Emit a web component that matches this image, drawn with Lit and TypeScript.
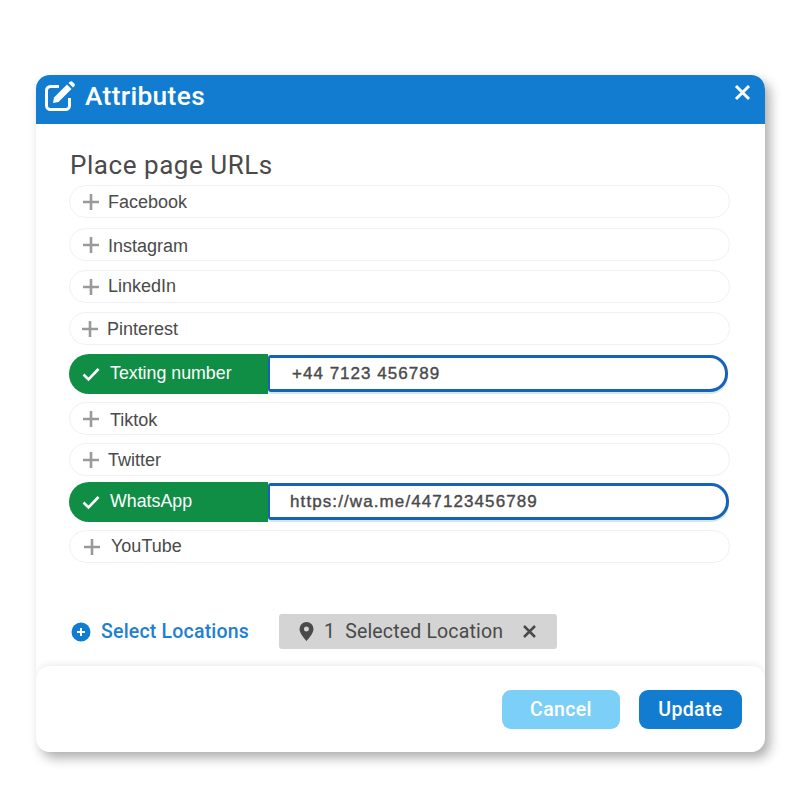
import { LitElement, html, css, svg } from "lit";
import { customElement } from "lit/decorators.js";

interface Row { label: string; gap: number; value?: string; track?: number; wide?: boolean; textX?: number; textY?: number; iconX?: number; iconY?: number; }

const rows: Row[] = [
  { label: "Facebook", gap: 0, textX: 38, textY: 6, iconX: 13, iconY: 8 },
  { label: "Instagram", gap: 10, textX: 38, textY: 7, iconX: 13, iconY: 8 },
  { label: "LinkedIn", gap: 9, textX: 38, textY: 5, iconX: 13, iconY: 8 },
  { label: "Pinterest", gap: 9, textX: 37, textY: 6, iconX: 12, iconY: 8 },
  { label: "Texting number", gap: 9, value: "+44 7123 456789", track: 1.02 },
  { label: "Tiktok", gap: 8, textX: 40, textY: 7, iconX: 13, iconY: 8 },
  { label: "Twitter", gap: 8, textX: 38, textY: 6, iconX: 13, iconY: 8 },
  { label: "WhatsApp", gap: 6, value: "https://wa.me/447123456789", track: 1.1, wide: true },
  { label: "YouTube", gap: 8, textX: 41, textY: 5, iconX: 14, iconY: 8 },
];

const plus = svg`<path d="M8 0v16M0 8h16" stroke="#9a9a9a" stroke-width="2.6" fill="none"/>`;
const check = svg`<path d="M1.500 8.500 6.500 13.500 16.500 3" stroke="#fff" stroke-width="2.600" fill="none"/>`;

@customElement("app-root")
export class AppRoot extends LitElement {
  static styles = css`
    :host { display: block; width: 800px; height: 800px; background: #fff; font-family: Roboto, "Liberation Sans", sans-serif; padding: 75px 35px 0 36px; box-sizing: border-box; }
    .dialog { width: 729px; height: 677px; background: #fff; border-radius: 14px; box-shadow: 5px 6px 12px rgba(0,0,0,.32); display: flex; flex-direction: column; overflow: hidden; }
    .head { height: 48.500px; flex: none; background: #127dd0; color: #fff; display: flex; align-items: center; padding-left: 8px; box-sizing: border-box; position: relative; }
    .head .edit { width: 31px; height: 31px; flex: none; margin-bottom: 6px; }
    .head h1 { margin: 0 0 6px 10px; font-size: 26.300px; font-weight: 500; letter-spacing: .35px; line-height: 34px; }
    .head .close { position: absolute; right: 14px; top: 9px; width: 17px; height: 17px; }
    .body { flex: 1; padding: 25.500px 0 0 33px; position: relative; }
    h2 { margin: 0 0 0 1px; font-size: 26px; font-weight: 400; color: #4a4a4a; line-height: 32px; letter-spacing: .55px; height: 36px; }
    .list { display: flex; flex-direction: column; width: 661px; }
    .row { height: 33px; box-sizing: border-box; border: 1px solid #f0f0f0; border-radius: 17px; display: flex; align-items: center; color: #4a4a4a; font: 18px "Liberation Sans", Arial, sans-serif; position: relative; }
    .row svg { width: 16px; height: 16px; flex: none; position: absolute; }
    .row span { position: absolute; line-height: 20px; }
    .row.on { height: 40px; border: 0; }
    .pill { width: 199px; height: 40px; background: #118e45; color: #fff; border-radius: 20px 0 0 20px; display: flex; align-items: center; flex: none; font-size: 17.800px; position: relative; }
    .pill svg { width: 18px; height: 16px; left: 13px; top: 12px; }
    .pill span { left: 41px; top: 9px; }
    .field { width: 460px; height: 37px; box-sizing: border-box; border: 3px solid #1761b8; border-left-width: 2px; border-radius: 3px 18px 18px 3px; background: #fff; margin-bottom: 1px; box-shadow: -1px 0 0 #e8f3ec, 0 2px 0 #d4e8dc; display: flex; align-items: center; padding-left: 22px; color: #4a4a4a; font: 17px "Liberation Sans", Arial, sans-serif; -webkit-text-stroke: .4px #4a4a4a; }
    .field.wide { width: 461px; padding-left: 20px; }
    .sel { position: absolute; left: 35px; top: 490.500px; display: flex; align-items: center; }
    .sel .add { width: 20px; height: 20px; }
    .sel b { color: #1f7fd2; font-size: 19.500px; font-weight: 500; margin-left: 10px; letter-spacing: .2px; }
    .chip { margin-left: 30px; width: 278px; height: 35px; background: #d4d4d4; border-radius: 3px; display: flex; align-items: center; color: #4a4a4a; font-size: 19.500px; box-sizing: border-box; padding-left: 20px; letter-spacing: .16px; }
    .chip .pin { width: 15px; height: 19px; margin-right: 10px; }
    .chip .txt { margin-left: 10px; }
    .chip .x { width: 15px; height: 15px; margin-left: 19px; }
    .foot { height: 86px; flex: none; background: #fff; border-radius: 14px; box-shadow: 0 -2px 6px rgba(0,0,0,.07); display: flex; justify-content: flex-end; padding: 24px 23px 0 0; box-sizing: border-box; gap: 19px; }
    .btn { height: 39px; border-radius: 9px; display: flex; align-items: center; justify-content: center; color: #fff; font-size: 19.500px; font-weight: 500; letter-spacing: .35px; }
    .cancel { width: 118px; background: #7ccff6; }
    .update { width: 103px; background: #127dd0; }
  `;

  render() {
    return html`<div class="dialog">
      <div class="head">
        <svg class="edit" viewBox="0 0 31 31" fill="none">
          <path d="M15 5.500H6.500a4 4 0 0 0-4 4v15a4 4 0 0 0 4 4h15a4 4 0 0 0 4-4V17" stroke="#fff" stroke-width="3"/>
          <path d="M10 16.500 23 3.500l4.500 4.500-13 13-5.500 1z" fill="#fff"/>
          <path d="M24.500 2 26 .8a1.800 1.800 0 0 1 2.400 0l2 2a1.800 1.800 0 0 1 0 2.400L29 6.600z" fill="#fff"/>
        </svg>
        <h1>Attributes</h1>
        <svg class="close" viewBox="0 0 17 17"><path d="M2 2l13 13M15 2 2 15" stroke="#fff" stroke-width="3"/></svg>
      </div>
      <div class="body">
        <h2>Place page URLs</h2>
        <div class="list">
          ${rows.map((r) => r.value
            ? html`<div class="row on" style="margin-top:${r.gap}px">
                <div class="pill"><svg viewBox="0 0 18 16">${check}</svg><span>${r.label}</span></div>
                <div class="field ${r.wide ? "wide" : ""}" style="letter-spacing:${r.track}px">${r.value}</div>
              </div>`
            : html`<div class="row" style="margin-top:${r.gap}px">
                <svg viewBox="0 0 16 16" style="left:${r.iconX}px;top:${r.iconY}px">${plus}</svg><span style="left:${r.textX}px;top:${r.textY}px">${r.label}</span>
              </div>`)}
        </div>
        <div class="sel">
          <svg class="add" viewBox="0 0 20 20"><circle cx="10" cy="10" r="9.500" fill="#127dd0"/><path d="M10 6v8M6 10h8" stroke="#fff" stroke-width="2"/></svg>
          <b>Select Locations</b>
          <div class="chip">
            <svg class="pin" viewBox="0 0 15 19"><path fill-rule="evenodd" d="M7.500 0A7 7 0 0 0 .5 7c0 4.800 7 12 7 12s7-7.200 7-12a7 7 0 0 0-7-7zm0 9.500a2.500 2.500 0 1 1 0-5 2.500 2.500 0 0 1 0 5z" fill="#4a4a4a"/></svg>1<span class="txt">Selected Location</span><svg class="x" viewBox="0 0 15 15"><path d="M2 2l11 11M13 2 2 13" stroke="#4a4a4a" stroke-width="2.500"/></svg>
          </div>
        </div>
      </div>
      <div class="foot">
        <div class="btn cancel">Cancel</div>
        <div class="btn update">Update</div>
      </div>
    </div>`;
  }
}
